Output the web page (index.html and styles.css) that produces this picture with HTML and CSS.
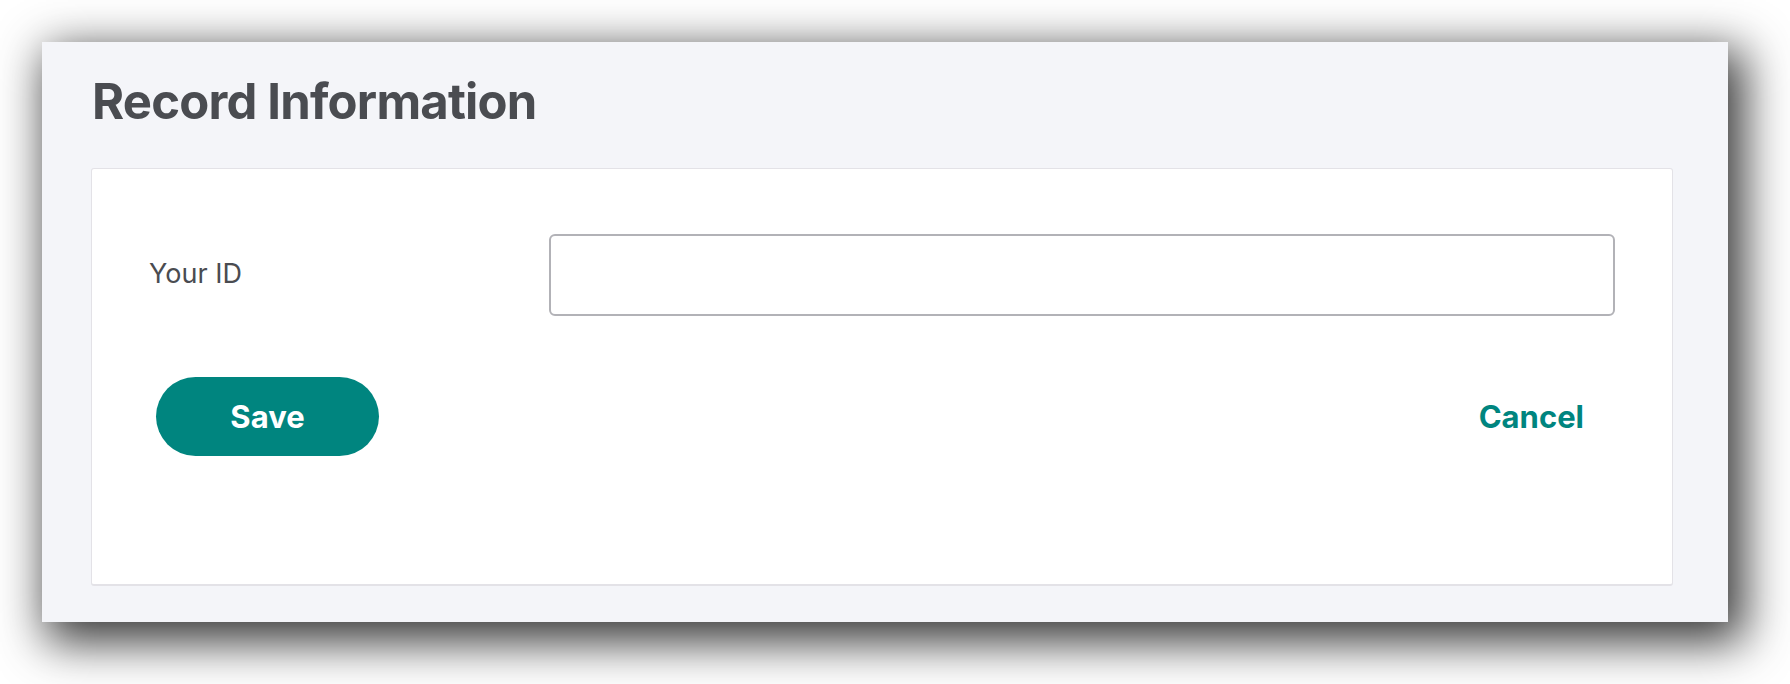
FILE: index.html
```html
<!DOCTYPE html>
<html lang="en">
<head>
<meta charset="utf-8">
<title>Record Information</title>
<link rel="stylesheet" href="styles.css">
</head>
<body>
<div class="stage">
  <section class="panel">
    <h1 class="panel-title">Record Information</h1>
    <div class="card">
      <div class="field-row">
        <label class="field-label" for="your-id">Your ID</label>
        <input class="field-input" id="your-id" type="text">
      </div>
      <div class="actions">
        <button class="btn-save" type="button">Save</button>
        <button class="btn-cancel" type="button">Cancel</button>
      </div>
    </div>
  </section>
</div>
</body>
</html>
```

FILE: styles.css
```css
* { box-sizing: border-box; }

html, body {
  margin: 0;
  padding: 0;
  background: #ffffff;
}

body {
  font-family: Inter, "Noto Sans", "Liberation Sans", sans-serif;
  width: 1790px;
  height: 684px;
  overflow: hidden;
}

.stage {
  padding: 42px 62px 62px 42px;
}

.panel {
  width: 1686px;
  height: 580px;
  background: #f4f5f9;
  padding: 30px 55px 36px 49px;
  box-shadow: 10px 14px 44px 6px rgba(0, 0, 0, 0.78);
}

.panel-title {
  margin: 0 0 37px 1px;
  font-size: 49px;
  line-height: 59px;
  font-weight: 700;
  color: #4a4c51;
  letter-spacing: -0.8px;
}

.card {
  height: 418px;
  background: #ffffff;
  border: 1px solid #e3e2e7;
  border-bottom-width: 2px;
  border-radius: 3px;
  padding: 65px 57px 0 57px;
}

.field-row {
  display: grid;
  grid-template-columns: 400px 1fr;
  align-items: center;
}

.field-label {
  font-size: 27px;
  color: #4a4c51;
  padding-bottom: 4px;
}

.field-input {
  height: 82px;
  width: 100%;
  border: 2px solid #b2b2b7;
  border-radius: 6px;
  background: #ffffff;
  font: inherit;
  outline: none;
}

.actions {
  margin-top: 61px;
  display: flex;
  justify-content: space-between;
  align-items: center;
  padding-left: 7px;
  padding-right: 31px;
}

.btn-save {
  width: 223px;
  height: 79px;
  border: none;
  border-radius: 40px;
  background: #00857f;
  color: #ffffff;
  font-family: inherit;
  font-size: 31px;
  font-weight: 700;
  cursor: pointer;
}

.btn-cancel {
  border: none;
  background: transparent;
  padding: 0;
  color: #00857f;
  font-family: inherit;
  font-size: 31px;
  font-weight: 700;
  cursor: pointer;
}
```
